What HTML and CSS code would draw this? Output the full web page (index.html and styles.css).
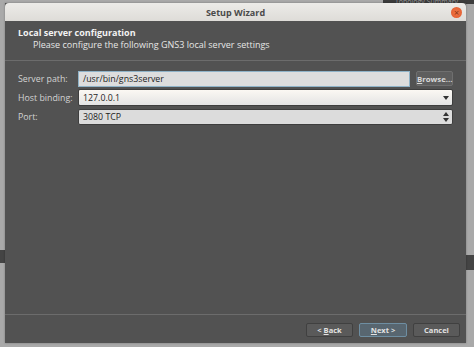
FILE: index.html
```html
<!DOCTYPE html>
<html lang="en">
<head>
    <meta charset="UTF-8">
    <title>Setup Wizard</title>
    <link rel="stylesheet" href="styles.css">
</head>
<body>
    <div class="desk-strip">Topology Summary</div>
    <div class="desk-block left"></div>
    <div class="desk-block right"></div>

    <div class="dialog">
        <div class="titlebar">
            <span class="title">Setup Wizard</span>
            <span class="close">&#215;</span>
        </div>

        <div class="page-header">
            <div class="page-title">Local server configuration</div>
            <div class="page-subtitle">Please configure the following GNS3 local server settings</div>
        </div>

        <div class="form">
            <div class="row">
                <label class="label">Server path:</label>
                <div class="field input">/usr/bin/gns3server</div>
                <button class="browse"><u>B</u>rowse...</button>
            </div>
            <div class="row">
                <label class="label">Host binding:</label>
                <div class="field combo">
                    <span>127.0.0.1</span>
                    <svg class="arrow" width="6" height="4" viewBox="0 0 6 4"><path d="M0 0H6L3 4Z" fill="#333"/></svg>
                </div>
            </div>
            <div class="row">
                <label class="label">Port:</label>
                <div class="field spin">
                    <span>3080 TCP</span>
                    <svg class="arrow" width="6" height="10" viewBox="0 0 6 10"><path d="M3 0L6 4H0Z M0 6H6L3 10Z" fill="#333"/></svg>
                </div>
            </div>
        </div>

        <div class="footer">
            <button class="btn">&lt; <u>B</u>ack</button>
            <button class="btn default"><u>N</u>ext &gt;</button>
            <button class="btn">Cancel</button>
        </div>
    </div>
</body>
</html>
```

FILE: styles.css
```css
* {
    margin: 0;
    padding: 0;
    box-sizing: border-box;
}

body {
    font-family: 'Open Sans', 'DejaVu Sans', sans-serif;
    background-color: #a9a9a9;
    width: 474px;
    height: 347px;
    overflow: hidden;
    position: relative;
}

/* bits of the desktop behind the dialog */
.desk-strip {
    position: absolute;
    top: 0;
    left: 383px;
    width: 91px;
    height: 4px;
    background: #3c3c3c;
    color: #999;
    font-size: 7px;
    line-height: 4px;
    overflow: hidden;
    padding-left: 12px;
}

.desk-block {
    position: absolute;
    background: #444;
}

.desk-block.left {
    left: 0;
    top: 250px;
    width: 5px;
    height: 13px;
}

.desk-block.right {
    left: 466px;
    top: 255px;
    width: 8px;
    height: 15px;
}

.dialog {
    position: relative;
    margin: 3px 0 0 5px;
    width: 461px;
    height: 340px;
    background: #525252;
    display: flex;
    flex-direction: column;
    box-shadow: 0 0 2px rgba(0, 0, 0, 0.3);
}

.titlebar {
    height: 18px;
    background: linear-gradient(#ecebe8, #dedcd8);
    border-radius: 4px 4px 0 0;
    display: flex;
    align-items: center;
    justify-content: center;
    position: relative;
}

.title {
    font-size: 9px;
    font-weight: bold;
    color: #4a4a4a;
}

.close {
    position: absolute;
    right: 4px;
    top: 4px;
    width: 11px;
    height: 11px;
    border-radius: 50%;
    background: radial-gradient(#f07a4a, #e0562a);
    color: #8a3010;
    font-size: 9px;
    line-height: 11px;
    text-align: center;
}

.page-header {
    height: 40px;
    padding: 6px 0 0 13px;
    border-bottom: 1px solid #6c6c6c;
    color: #f2f2f2;
}

.page-title {
    font-size: 9px;
    font-weight: bold;
    line-height: 12px;
}

.page-subtitle {
    font-size: 9px;
    line-height: 12px;
    padding-left: 15px;
    color: #e6e6e6;
}

.form {
    flex: 1;
    padding: 9px 13px 0 13px;
    display: flex;
    flex-direction: column;
    gap: 2px;
}

.row {
    display: flex;
    align-items: center;
    height: 17px;
}

.label {
    width: 60px;
    font-size: 8.8px;
    color: #d2d2d2;
}

.field {
    flex: 1;
    height: 16px;
    font-size: 8.8px;
    color: #1e1e1e;
    display: flex;
    align-items: center;
    justify-content: space-between;
    padding: 0 3px 0 4px;
}

.input {
    background: #dddddd;
    border: 1px solid #8fb3c8;
}

.combo {
    height: 17px;
    background: linear-gradient(#fbf8f3, #e4e4e4);
    border: 1px solid #3e3e3e;
    border-radius: 2px;
}

.spin {
    background: #dcdcdc;
    border: 1px solid #3e3e3e;
    border-radius: 2px;
}

.browse {
    width: 37px;
    height: 15px;
    margin-left: 6px;
    background: #5e5e5e;
    border: 1px solid #6f6f6f;
    border-radius: 2px;
    color: #d8d8d8;
    font-family: inherit;
    font-size: 7.8px;
    font-weight: bold;
}

.footer {
    height: 29px;
    border-top: 1px solid #6c6c6c;
    display: flex;
    justify-content: flex-end;
    align-items: flex-start;
    gap: 6px;
    padding: 8px 6px 0 0;
}

.btn {
    width: 47px;
    height: 14px;
    background: #5a5a5a;
    border: 1px solid #404040;
    border-radius: 2px;
    color: #e2e2e2;
    font-family: inherit;
    font-size: 7.5px;
    font-weight: bold;
}

.btn.default {
    width: 48px;
    background: #586670;
    border-color: #6e8ea2;
}
```
